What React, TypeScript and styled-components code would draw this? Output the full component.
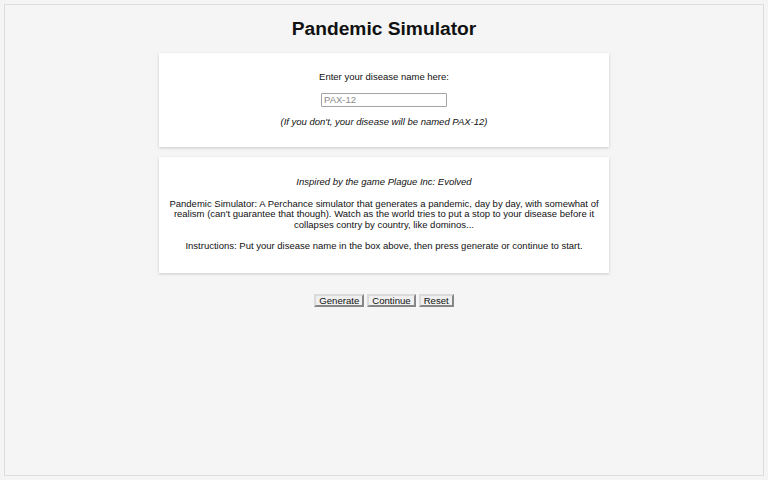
import React, {useState} from 'react';
import styled, {createGlobalStyle} from 'styled-components';

const GlobalStyle = createGlobalStyle`
  html, body {
    margin: 0;
    padding: 0;
    background: #f4f4f4;
  }

  body {
    padding: 4px;
    box-sizing: border-box;
    height: 100vh;
    font-family: "Liberation Sans", Arial, sans-serif;
    color: #111;
  }

  #root {
    height: 100%;
  }
`

const Frame = styled.div`
  box-sizing: border-box;
  height: 100%;
  border: 1px solid #dcdcdc;
  background: #f5f5f5;
  display: flex;
  flex-direction: column;
  align-items: center;
  padding-top: 13px;

  h1 {
    margin: 0 0 13px;
    font-size: 19.2px;
    line-height: 22px;
    font-weight: bold;
    color: #111;
  }
`

const Card = styled.section<{$gap?: number; $spacing: number}>`
  box-sizing: border-box;
  width: 450px;
  background: #fff;
  padding: 9px 7px 10px;
  margin-bottom: ${p => p.$gap ?? 10}px;
  box-shadow: 0 1px 3px rgba(0, 0, 0, 0.18);
  text-align: center;
  font-size: 9.5px;
  line-height: 10.5px;

  p {
    margin: ${p => p.$spacing}px 0;
  }
`

const CardText = styled.p<{$italic?: boolean}>`
  font-style: ${p => (p.$italic ? 'italic' : 'normal')};
`

const NameInput = styled.input`
  display: block;
  box-sizing: border-box;
  width: 126px;
  height: 14px;
  margin: 0 auto;
  padding: 0 2px;
  border: 1px solid #a3a3a3;
  border-radius: 1px;
  font-family: "Liberation Sans", Arial, sans-serif;
  font-size: 9.5px;
  color: #111;

  &::placeholder {
    color: #8a8a8a;
  }
`

const Buttons = styled.div`
  display: flex;
  gap: 3px;
  margin-top: 21px;
`

const Button = styled.button`
  font-family: "Liberation Sans", Arial, sans-serif;
  font-size: 9.6px;
  line-height: 9px;
  color: #111;
  background: #efefef;
  border: 2px outset #dadada;
  border-radius: 0;
  padding: 0 3px;
  cursor: pointer;

  &:active {
    border-style: inset;
  }
`

const App: React.FC = () => {
    const [name, setName] = useState('')

    return (
        <>
            <GlobalStyle/>
            <Frame>
                <h1>Pandemic Simulator</h1>

                <Card $spacing={10}>
                    <CardText>Enter your disease name here:</CardText>
                    <NameInput placeholder='PAX-12' value={name} onChange={e => setName(e.target.value)}/>
                    <CardText $italic>(If you don't, your disease will be named PAX-12)</CardText>
                </Card>

                <Card $spacing={11} $gap={0}>
                    <CardText $italic>Inspired by the game Plague Inc: Evolved</CardText>
                    <CardText>
                        Pandemic Simulator: A Perchance simulator that generates a pandemic, day by day, with somewhat of
                        realism (can't guarantee that though). Watch as the world tries to put a stop to your disease
                        before it collapses contry by country, like dominos...
                    </CardText>
                    <CardText>Instructions: Put your disease name in the box above, then press generate or continue to start.</CardText>
                </Card>

                <Buttons>
                    <Button>Generate</Button>
                    <Button>Continue</Button>
                    <Button>Reset</Button>
                </Buttons>
            </Frame>
        </>
    );
}

export default App
